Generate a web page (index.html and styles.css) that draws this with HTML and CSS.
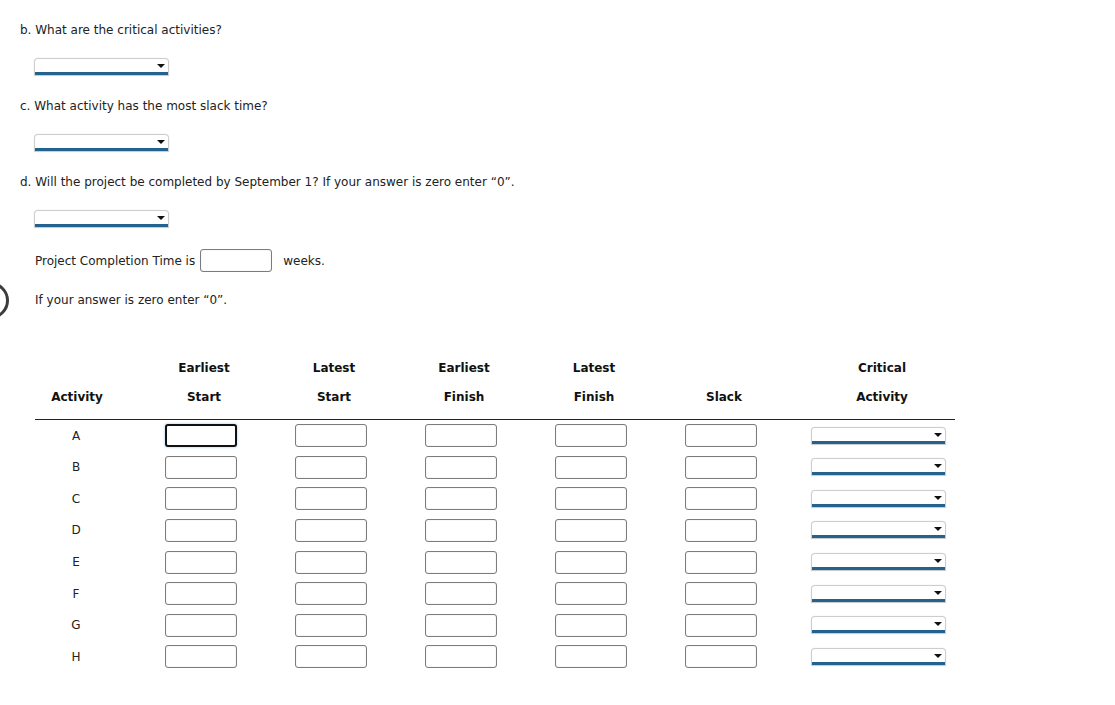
FILE: index.html
```html
<!DOCTYPE html>
<html>
<head>
<meta charset="utf-8">
<link rel="stylesheet" href="styles.css">
</head>
<body>
<div class="page">
  <div class="circle"></div>
  <p class="q q-first">b. What are the critical activities?</p>
  <div class="dd-row"><div class="dd"><span class="arrow"></span></div></div>
  <p class="q">c. What activity has the most slack time?</p>
  <div class="dd-row"><div class="dd"><span class="arrow"></span></div></div>
  <p class="q">d. Will the project be completed by September 1? If your answer is zero enter “0”.</p>
  <div class="dd-row"><div class="dd"><span class="arrow"></span></div></div>
  <div class="pct">
    <span>Project Completion Time is</span>
    <span class="box pct-box"></span>
    <span class="weeks">weeks.</span>
  </div>
  <p class="note">If your answer is zero enter “0”.</p>

  <div class="table">
    <div class="thead">
      <div class="th c-act"><span></span><span>Activity</span></div>
      <div class="th"><span>Earliest</span><span>Start</span></div>
      <div class="th"><span>Latest</span><span>Start</span></div>
      <div class="th"><span>Earliest</span><span>Finish</span></div>
      <div class="th"><span>Latest</span><span>Finish</span></div>
      <div class="th"><span></span><span>Slack</span></div>
      <div class="th c-crit"><span>Critical</span><span>Activity</span></div>
    </div>
    <div class="rule"></div>
    <div class="tbody" id="tbody"></div>
  </div>
</div>
<script src="script.js"></script>
</body>
</html>
```

FILE: script.js
```js
var letters = ["A","B","C","D","E","F","G","H"];
var tb = document.getElementById("tbody");
letters.forEach(function (l, i) {
  var row = document.createElement("div");
  row.className = "tr";
  var html = '<div class="td c-act">' + l + '</div>';
  for (var k = 0; k < 5; k++) {
    html += '<div class="td"><span class="box' + (i === 0 && k === 0 ? ' focus' : '') + '"></span></div>';
  }
  html += '<div class="td c-crit"><div class="dd"><span class="arrow"></span></div></div>';
  row.innerHTML = html;
  tb.appendChild(row);
});
```

FILE: styles.css
```css
html, body {
  margin: 0;
  padding: 0;
  background: #fff;
}
body {
  font-family: "DejaVu Sans", Verdana, sans-serif;
  font-size: 12px;
  color: #222;
}
.page {
  position: relative;
  padding: 22.5px 0 0 20px;
  width: 1095px;
  height: 682.5px;
  overflow: hidden;
}
.circle {
  position: absolute;
  left: -28px;
  top: 282px;
  width: 31px;
  height: 31px;
  border: 3px solid #3c3c3c;
  border-radius: 50%;
}
.q {
  margin: 23.5px 0 0 0;
  line-height: 15px;
}
.q-first {
  margin-top: 0;
}
.dd-row {
  margin-top: 21.5px;
  padding-left: 15px;
  height: 16px;
}
.dd {
  position: relative;
  width: 133px;
  height: 13px;
  border-bottom: 3px solid #23628f;
  border-radius: 3px 3px 0 0;
  box-shadow: 0 0 1px 1px #c8c8c8;
  background: #fff;
}
.arrow {
  position: absolute;
  right: 3px;
  top: 5px;
  width: 0;
  height: 0;
  border-left: 4px solid transparent;
  border-right: 4px solid transparent;
  border-top: 4px solid #111;
}
.pct {
  margin-top: 22px;
  padding-left: 15px;
  display: flex;
  align-items: center;
  height: 23px;
}
.box {
  display: inline-block;
  box-sizing: border-box;
  width: 72px;
  height: 23px;
  border: 1px solid #7c7c7c;
  border-radius: 3px;
  background: #fff;
  box-shadow: inset 0 0 1px #bbb;
}
.box.focus {
  border: 2px solid #111;
  box-shadow: 0 0 2px 1px #cfe6fb;
}
.pct-box {
  margin-left: 5px;
}
.weeks {
  margin-left: 11px;
}
.note {
  margin: 20.5px 0 0 15px;
  line-height: 15px;
}
.table {
  margin: 53px 0 0 15px;
  width: 920px;
}
.thead, .tr {
  display: grid;
  grid-template-columns: 104px 130px 130px 130px 130px 130px 166px;
}
.th {
  display: flex;
  flex-direction: column;
  align-items: center;
  gap: 14px;
  font-weight: bold;
  color: #111;
  line-height: 15px;
}
.th span {
  height: 15px;
}
.th.c-act {
  padding-right: 20px;
}
.th.c-crit, .td.c-crit {
  padding-left: 20px;
}
.rule {
  margin-top: 14.5px;
  height: 1px;
  background: #222;
}
.tr {
  height: 31.57px;
  align-items: center;
}
.td {
  display: flex;
  justify-content: center;
  padding-right: 6px;
}
.td.c-act {
  padding-right: 22px;
}
.td.c-crit {
  padding-right: 7px;
}
```
